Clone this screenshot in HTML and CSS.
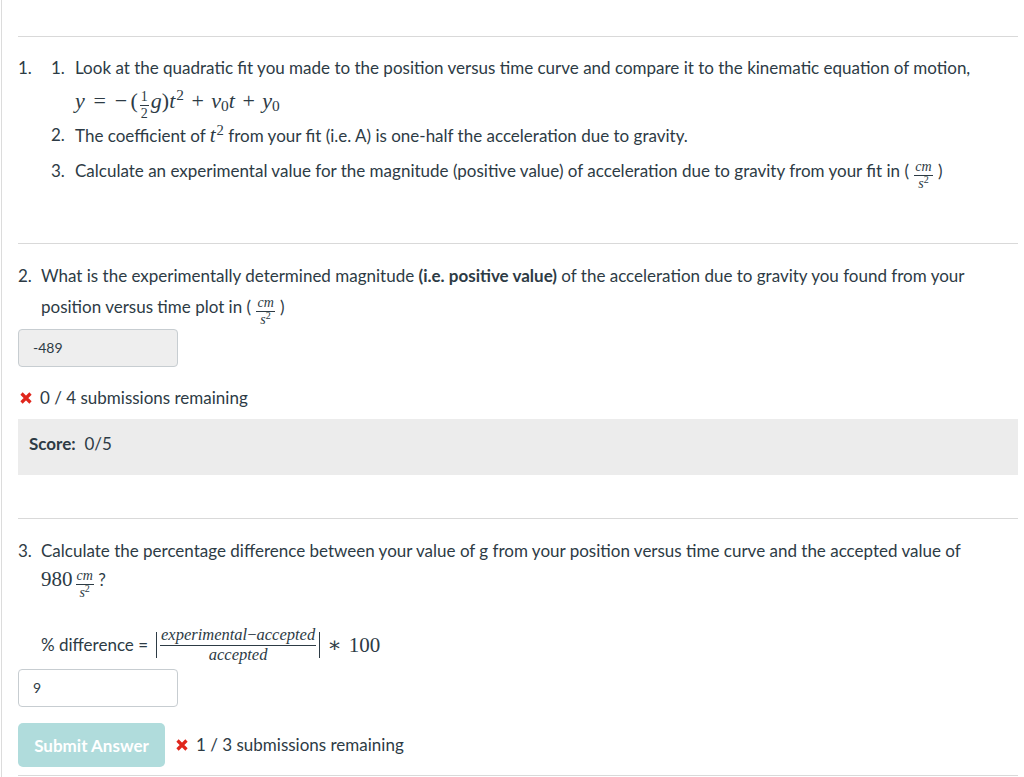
FILE: index.html
```html
<!DOCTYPE html>
<html>
<head>
<meta charset="utf-8">
<link rel="stylesheet" href="styles.css">
</head>
<body>
<div class="page">
  <section class="q q1">
    <hr class="rule">
    <div class="qbody">
      <div class="item">
        <span class="num outer">1.</span>
        <div class="sub">
          <div class="subrow r1"><span class="num inner">1.</span><span>Look at the quadratic fit you made to the position versus time curve and compare it to the kinematic equation of motion,</span></div>
          <div class="mathrow"><span class="math"><i>y</i><span class="rel">=</span><span class="neg">−</span>(<span class="frac half"><span class="n">1</span><span class="d">2</span></span><i>g</i>)<i>t</i><sup>2</sup><span class="bin">+</span><i>v</i><sub>0</sub><i>t</i><span class="bin">+</span><i>y</i><sub>0</sub></span></div>
          <div class="subrow r2"><span class="num inner">2.</span><span>The coefficient of <span class="math"><i>t</i><sup>2</sup></span> from your fit (i.e. A) is one-half the acceleration due to gravity.</span></div>
          <div class="subrow r3"><span class="num inner">3.</span><span>Calculate an experimental value for the magnitude (positive value) of acceleration due to gravity from your fit in ( <span class="frac unit"><span class="n"><i>cm</i></span><span class="d"><i>s</i><sup>2</sup></span></span> )</span></div>
        </div>
      </div>
    </div>
  </section>

  <section class="q q2">
    <hr class="rule">
    <div class="item para2">
      <span class="num">2.</span>
      <p>What is the experimentally determined magnitude <b>(i.e. positive value)</b> of the acceleration due to gravity you found from your position versus time plot in ( <span class="frac unit"><span class="n"><i>cm</i></span><span class="d"><i>s</i><sup>2</sup></span></span> )</p>
    </div>
    <div class="answer disabled">-489</div>
    <div class="status s1"><svg class="x" viewBox="0 0 12 12"><path d="M1.5 1.5L10.5 10.5M10.5 1.5L1.5 10.5"/></svg><span>0 / 4 submissions remaining</span></div>
    <div class="score"><b>Score:</b>&nbsp; 0/5</div>
  </section>

  <section class="q q3">
    <hr class="rule">
    <div class="item para3">
      <span class="num">3.</span>
      <p>Calculate the percentage difference between your value of g from your position versus time curve and the accepted value of <span class="math">980<span class="frac unit tight"><span class="n"><i>cm</i></span><span class="d"><i>s</i><sup>2</sup></span></span></span> ?</p>
    </div>
    <div class="formula">
      <span class="label">% difference = </span>
      <span class="math expr"><span class="bar"></span><span class="frac wide"><span class="n"><i>experimental</i>−<i>accepted</i></span><span class="d"><i>accepted</i></span></span><span class="bar"></span><span class="bin">∗</span>100</span>
    </div>
    <div class="answer">9</div>
    <div class="actions">
      <button class="submit">Submit Answer</button>
      <div class="status"><svg class="x" viewBox="0 0 12 12"><path d="M1.5 1.5L10.5 10.5M10.5 1.5L1.5 10.5"/></svg><span>1 / 3 submissions remaining</span></div>
    </div>
    <hr class="rule bottom">
  </section>
</div>
</body>
</html>
```

FILE: styles.css
```css
html, body {
  margin: 0;
  padding: 0;
  background: #fff;
}
body {
  font-family: Lato, "Open Sans", sans-serif;
  font-size: 17px;
  color: #2d3b45;
  line-height: 24px;
}
.page {
  margin-left: 1px;
  border-left: 1px solid #dcdcdc;
  padding-left: 16px;
  padding-top: 36px;
  width: 1000px;
  min-height: 741px;
}
.rule {
  border: 0;
  height: 1px;
  background: #d9d9d9;
  margin: 0;
}
.item {
  display: flex;
}
.num {
  flex: none;
}
.num.outer {
  width: 33px;
}
.num.inner {
  width: 24px;
}
.qbody {
  padding-top: 19px;
  padding-bottom: 60px;
}
.sub {
  display: flex;
  flex-direction: column;
}
.subrow {
  display: flex;
  height: 24px;
}
.mathrow {
  padding-left: 24px;
  height: 26px;
  line-height: 26px;
  margin-top: 8px;
}
.subrow.r2 {
  margin-top: 9px;
}
.subrow.r3 {
  margin-top: 12px;
}
.math {
  font-family: "Liberation Serif", "DejaVu Serif", serif;
  font-size: 21px;
  white-space: nowrap;
}
.mathrow .math {
  font-size: 22px;
}
.math i {
  font-style: italic;
}
.math sup {
  font-size: 0.7em;
  vertical-align: 0.5em;
  line-height: 0;
}
.math sub {
  font-size: 0.7em;
  vertical-align: -0.2em;
  line-height: 0;
}
.math > i + sup {
  margin-left: 1px;
}
.rel {
  margin: 0 0.4em;
}
.bin {
  margin: 0 0.34em;
}
.neg {
  margin-right: 0.15em;
}
.frac {
  display: inline-flex;
  flex-direction: column;
  align-items: center;
  line-height: 1;
  font-family: "Liberation Serif", "DejaVu Serif", serif;
}
.frac .n {
  border-bottom: 1px solid currentColor;
  padding: 0 1px 1px;
}
.frac .d {
  padding-top: 1px;
}
.frac sup {
  font-size: 0.72em;
  vertical-align: 0.45em;
  line-height: 0;
}
.frac.half {
  font-size: 14px;
  vertical-align: 7px;
  margin: -8px 2px;
}
.frac.unit {
  font-size: 14px;
  vertical-align: 6px;
  margin: -6px 1px;
}
.frac.unit.tight {
  margin-left: 3px;
  margin-right: 0;
}
.frac.wide {
  font-size: 16.5px;
  margin: 0 3px;
}
.frac.wide .n {
  padding: 0 1px 1px;
}
.frac.wide .d {
  padding-top: 1px;
}

/* Question 2 */
.para2 {
  padding-top: 16px;
}
.para2 .num {
  width: 23px;
  line-height: 31px;
}
.item p {
  margin: 0;
  line-height: 31px;
  padding-right: 24px;
}
.item b {
  font-weight: 700;
}
.answer {
  box-sizing: border-box;
  width: 160px;
  height: 38px;
  border: 1px solid #c7cdd1;
  border-radius: 4px;
  background: #fff;
  font-size: 14px;
  padding: 0 14px;
  line-height: 36px;
  margin-top: 7px;
}
.answer.disabled {
  background: #eeeeee;
}
.status {
  display: flex;
  align-items: center;
  gap: 8px;
}
.status.s1 {
  margin-top: 19px;
}
.x {
  width: 12px;
  height: 12px;
  flex: none;
  margin-left: 2px;
}
.x path {
  stroke: #e0261c;
  stroke-width: 3.2;
  stroke-linecap: butt;
  fill: none;
}
.score {
  margin-top: 9px;
  background: #ececec;
  height: 56px;
  box-sizing: border-box;
  padding: 13px 11px 0;
}
.score b {
  font-weight: 700;
}
.q2 {
  padding-bottom: 43px;
}

/* Question 3 */
.para3 {
  padding-top: 17px;
}
.para3 .num {
  width: 23px;
  line-height: 29px;
}
.para3 p {
  line-height: 29px;
}
.formula {
  margin-top: 33px;
  height: 36px;
  padding-left: 23px;
  display: flex;
  align-items: center;
}
.label {
  margin-right: 8px;
}
.expr {
  display: inline-flex;
  align-items: center;
}
.bar {
  display: inline-block;
  width: 1px;
  height: 26px;
  background: currentColor;
}
.q3 .answer {
  margin-top: 6px;
}
.actions {
  display: flex;
  align-items: center;
  margin-top: 16px;
  gap: 9px;
}
.submit {
  width: 147px;
  height: 44px;
  border: 0;
  border-radius: 5px;
  background: #b0dcdc;
  color: #fff;
  font-family: Lato, "Open Sans", sans-serif;
  font-weight: 700;
  font-size: 17px;
  padding: 0;
}
.rule.bottom {
  margin-top: 8px;
}
```
